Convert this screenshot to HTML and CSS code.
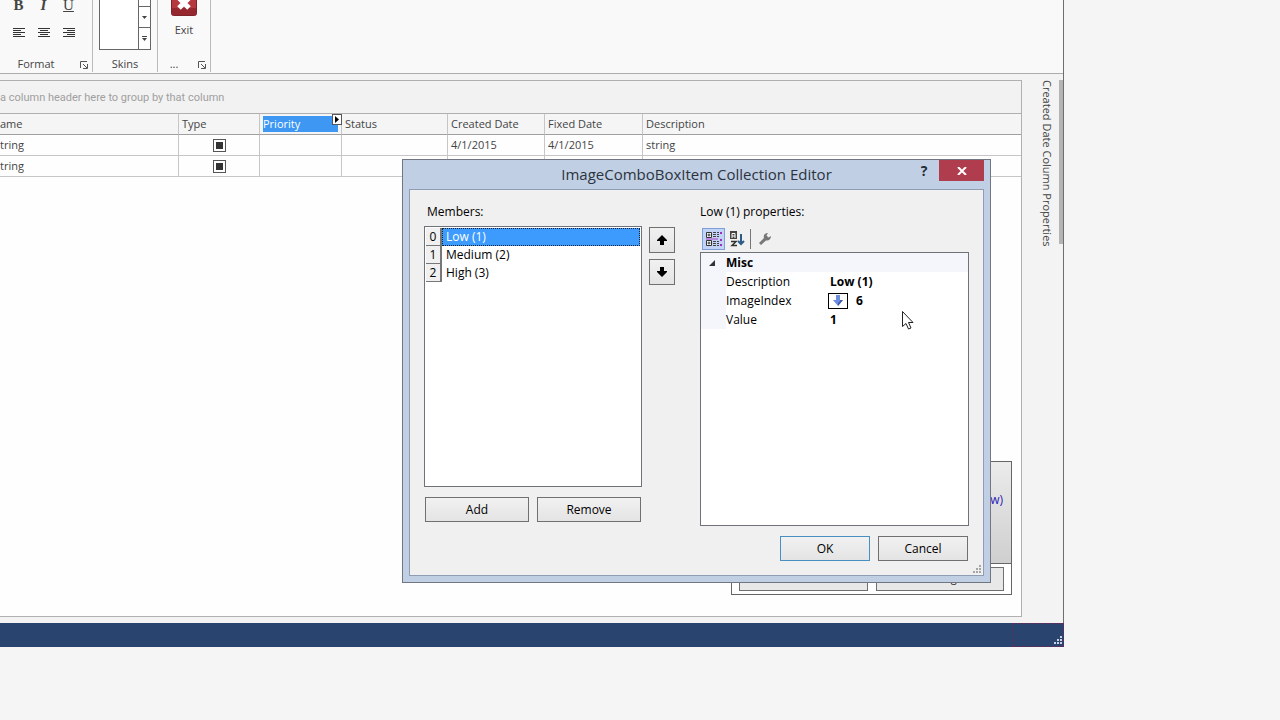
FILE: index.html
```html
<!DOCTYPE html>
<html lang="en">
<head>
    <meta charset="UTF-8">
    <meta name="viewport" content="width=device-width, initial-scale=1.0">
    <title>ImageComboBoxItem Collection Editor</title>
    <link rel="stylesheet" href="styles.css">
</head>
<body>
    <div class="designer">
        <!-- Ribbon -->
        <div class="ribbon">
            <div class="group group-format">
                <div class="group-body format-buttons">
                    <button class="tool bold">B</button>
                    <button class="tool italic">I</button>
                    <button class="tool underline">U</button>
                    <button class="tool" aria-label="Align left">
                        <svg width="12" height="10"><path d="M0 .5h12M0 2.5h8M0 4.5h12M0 6.5h8M0 8.5h12" stroke="#333"/></svg>
                    </button>
                    <button class="tool" aria-label="Center">
                        <svg width="12" height="10"><path d="M0 .5h12M2 2.5h8M0 4.5h12M2 6.5h8M0 8.5h12" stroke="#333"/></svg>
                    </button>
                    <button class="tool" aria-label="Align right">
                        <svg width="12" height="10"><path d="M0 .5h12M4 2.5h8M0 4.5h12M4 6.5h8M0 8.5h12" stroke="#333"/></svg>
                    </button>
                </div>
                <div class="group-caption">
                    <span>Format</span>
                    <svg class="launcher" width="8" height="8"><path d="M.5 7V.5H7M3 3l4 4M7.5 3v4.5H3" fill="none" stroke="#555"/></svg>
                </div>
            </div>
            <div class="group group-skins">
                <div class="group-body">
                    <div class="gallery">
                        <div class="gallery-view"></div>
                        <div class="gallery-scroll">
                            <button aria-label="Up"></button>
                            <button aria-label="Down"><svg width="5" height="3"><path d="M0 0h5L2.5 3z" fill="#444"/></svg></button>
                            <button aria-label="More"><svg width="5" height="5"><path d="M0 .5h5" stroke="#444"/><path d="M0 2h5L2.5 5z" fill="#444"/></svg></button>
                        </div>
                    </div>
                </div>
                <div class="group-caption"><span>Skins</span></div>
            </div>
            <div class="group group-exit">
                <div class="group-body">
                    <button class="exit">
                        <svg width="26" height="26" viewBox="0 0 26 26">
                            <rect x=".5" y=".5" width="25" height="25" rx="2" fill="#b5383f" stroke="#7d2329"/>
                            <rect x="1" y="18" width="24" height="7" fill="#96272e"/>
                            <path d="M8 8l10 10M18 8L8 18" stroke="#fff" stroke-width="5"/>
                        </svg>
                        <span>Exit</span>
                    </button>
                </div>
                <div class="group-caption">
                    <span>...</span>
                    <svg class="launcher" width="8" height="8"><path d="M.5 7V.5H7M3 3l4 4M7.5 3v4.5H3" fill="none" stroke="#555"/></svg>
                </div>
            </div>
        </div>

        <div class="workspace">
            <!-- Grid control -->
            <div class="grid-control">
                <div class="group-panel">a column header here to group by that column</div>
                <table class="grid">
                    <colgroup>
                        <col class="col-name"><col class="col-type"><col class="col-priority"><col class="col-status">
                        <col class="col-created"><col class="col-fixed"><col>
                    </colgroup>
                    <thead>
                        <tr>
                            <th class="cut">ame</th>
                            <th>Type</th>
                            <th class="selected"><div>Priority</div>
                                <button class="smart-tag" aria-label="Tasks"><svg width="4" height="7"><path d="M0 0v7l4-3.5z"/></svg></button>
                            </th>
                            <th>Status</th>
                            <th>Created Date</th>
                            <th>Fixed Date</th>
                            <th>Description</th>
                        </tr>
                    </thead>
                    <tbody>
                        <tr>
                            <td class="cut">tring</td>
                            <td class="check"><input type="checkbox" aria-label="Type"></td>
                            <td></td>
                            <td></td>
                            <td>4/1/2015</td>
                            <td>4/1/2015</td>
                            <td>string</td>
                        </tr>
                        <tr>
                            <td class="cut">tring</td>
                            <td class="check"><input type="checkbox" aria-label="Type"></td>
                            <td></td>
                            <td></td>
                            <td></td>
                            <td></td>
                            <td></td>
                        </tr>
                    </tbody>
                </table>
                <div class="view-popup">
                    <div class="view-level"><a href="#">w)</a></div>
                    <div class="view-buttons">
                        <button></button>
                        <button>Run Designer</button>
                    </div>
                </div>
            </div>
            <div class="side-panel">
                <span class="side-title">Created Date Column Properties</span>
                <div class="side-bar"></div>
            </div>
        </div>

        <div class="status-bar">
            <div class="status-slot">
                <svg width="8" height="8" fill="#c9d2e2"><path d="M6 0h2v2H6zM3 3h2v2H3zM6 3h2v2H6zM0 6h2v2H0zM3 6h2v2H3zM6 6h2v2H6z"/></svg>
            </div>
        </div>
    </div>

    <!-- Collection editor -->
    <div class="dialog" role="dialog" aria-labelledby="dialog-title">
        <div class="title-bar">
            <h1 id="dialog-title">ImageComboBoxItem Collection Editor</h1>
            <div class="title-buttons">
                <button class="help">?</button>
                <button class="close" aria-label="Close">
                    <svg width="10" height="8"><path d="M1 0l8 8M9 0L1 8" stroke="#fff" stroke-width="2"/></svg>
                </button>
            </div>
        </div>
        <div class="client">
            <div class="columns">
                <div class="members">
                    <div class="label" id="members-label">Members:</div>
                    <ul class="member-list" role="listbox" aria-labelledby="members-label">
                        <li class="active" role="option" aria-selected="true"><span class="index">0</span><span class="name">Low (1)</span></li>
                        <li role="option"><span class="index">1</span><span class="name">Medium (2)</span></li>
                        <li role="option"><span class="index">2</span><span class="name">High (3)</span></li>
                    </ul>
                    <div class="member-buttons">
                        <button class="btn">Add</button>
                        <button class="btn">Remove</button>
                    </div>
                </div>
                <div class="movers">
                    <button class="btn" aria-label="Move up">
                        <svg width="10" height="10"><path d="M5 0l5 5v1H7v4H3V6H0V5z"/></svg>
                    </button>
                    <button class="btn" aria-label="Move down">
                        <svg width="10" height="10"><path d="M5 10l5-5V4H7V0H3v4H0v1z"/></svg>
                    </button>
                </div>
                <div class="properties">
                    <div class="label">Low (1) properties:</div>
                    <div class="prop-toolbar">
                        <button class="prop-tool pressed" aria-label="Categorized">
                            <svg width="16" height="16" fill="none">
                                <path d="M.5 1.5h5v5h-5zM.5 9.5h5v5h-5z" fill="#fff" stroke="#333"/>
                                <path d="M1.5 4h3M3 2.5v3M1.5 12h3M3 10.5v3" stroke="#333"/>
                                <path d="M7 1.5h6M7 3.5h6M7 5.5h6M7 10.5h6M7 12.5h6M7 14.5h6" stroke="#444" stroke-dasharray="3 1"/>
                                <path d="M0 8h12" stroke="#b03cc4"/>
                                <path d="M14 1h2v2h-2zM14 8h2v2h-2zM14 13h2v2h-2z" fill="#a22cc0"/>
                            </svg>
                        </button>
                        <button class="prop-tool" aria-label="Alphabetical">
                            <svg width="16" height="16" fill="none">
                                <rect x="1" y="0" width="7" height="8" fill="#444"/>
                                <path d="M3 7V2.5h3V7M3 5h3" stroke="#fff"/>
                                <path d="M2 10.5h5L3 14.5h5" stroke="#333" stroke-width="1.5"/>
                                <path d="M12 3v10M9 10l3 3 3-3" stroke="#2b5c88" stroke-width="2"/>
                            </svg>
                        </button>
                        <span class="divider"></span>
                        <button class="prop-tool" aria-label="Property pages">
                            <svg width="12" height="12"><path d="M0 10l5-5C4 2 6 0 9 0L7.5 2.5l2 2L12 3c0 3-2 5-5 4.5L2 12z" fill="#777"/></svg>
                        </button>
                    </div>
                    <div class="prop-grid">
                        <table>
                            <colgroup><col class="col-gutter"><col class="col-prop"><col></colgroup>
                            <tbody>
                                <tr class="category">
                                    <td class="gutter"><svg width="6" height="6"><path d="M6 0v6H0z" fill="#333"/></svg></td>
                                    <th colspan="2">Misc</th>
                                </tr>
                                <tr>
                                    <td class="gutter"></td>
                                    <td>Description</td>
                                    <td class="prop-value">Low (1)</td>
                                </tr>
                                <tr>
                                    <td class="gutter"></td>
                                    <td>ImageIndex</td>
                                    <td class="prop-value">
                                        <div class="image-value">
                                            <span class="thumb"><svg width="10" height="11"><path d="M3 0h4v5h3L5 11 0 5h3z" fill="#6d8de0"/><path d="M7 0v5h3L5 11V8l2-2z" fill="#3f5bb0"/></svg></span>6
                                        </div>
                                    </td>
                                </tr>
                                <tr>
                                    <td class="gutter"></td>
                                    <td>Value</td>
                                    <td class="prop-value">1</td>
                                </tr>
                            </tbody>
                        </table>
                    </div>
                </div>
            </div>
            <div class="dialog-buttons">
                <button class="btn default">OK</button>
                <button class="btn">Cancel</button>
            </div>
            <svg class="grip" width="8" height="8" fill="#a5a5a5"><path d="M6 0h2v2H6zM3 3h2v2H3zM6 3h2v2H6zM0 6h2v2H0zM3 6h2v2H3zM6 6h2v2H6z"/></svg>
        </div>
    </div>

    <svg class="cursor" width="12" height="19"><path d="M.5.5v15l3.5-3 2.5 5.5 2.5-1-2.5-5.5h4.5z" fill="#fff" stroke="#222"/></svg>
</body>
</html>
```

FILE: styles.css
```css
* {
    box-sizing: border-box;
}

body {
    margin: 0;
    min-height: 100vh;
    padding: 0 216px 73px 0;
    display: flex;
    background: #f5f5f5;
    font-family: "Open Sans", "Noto Sans", sans-serif;
    font-size: 11px;
    color: #444;
    overflow: hidden;
}

button {
    font: inherit;
    color: inherit;
    background: none;
    border: none;
    padding: 0;
}

svg {
    display: block;
    flex-shrink: 0;
}

.designer {
    flex: 1;
    min-width: 0;
    display: flex;
    flex-direction: column;
    background: #f3f3f3;
    border-right: 1px solid #6e6e6e;
}

/* Ribbon */
.ribbon {
    display: flex;
    height: 74px;
    padding-bottom: 1px;
    background: #f9f9f9;
    border-bottom: 1px solid #ababab;
}

.group {
    display: flex;
    flex-direction: column;
    border-right: 1px solid #bbb;
}

.group-format { width: 93px; }
.group-skins { width: 65px; }
.group-exit { width: 53px; }

.group-body {
    flex: 1;
    min-height: 0;
}

.group-caption {
    position: relative;
    height: 16px;
    line-height: 16px;
    text-align: center;
}

.group-format .group-caption,
.group-exit .group-caption {
    padding-right: 20px;
}

.launcher {
    position: absolute;
    right: 4px;
    bottom: 3px;
}

.format-buttons {
    display: grid;
    grid-template-columns: repeat(3, 25px);
    grid-template-rows: 14px 42px;
    padding-left: 6px;
}

.tool {
    display: flex;
    align-items: center;
    justify-content: center;
    font-family: "Liberation Serif", serif;
    font-size: 15px;
    line-height: 8px;
    padding-bottom: 4px;
}

.bold { font-weight: bold; }
.italic { font-weight: bold; font-style: italic; }
.underline { text-decoration: underline; }

.gallery {
    display: flex;
    width: 52px;
    height: 50px;
    margin-left: 6px;
    background: #fff;
    border: 1px solid #666;
    border-top: none;
}

.gallery-view {
    flex: 1;
}

.gallery-scroll {
    width: 12px;
    display: grid;
    grid-template-rows: 6px 21px 22px;
    border-left: 1px solid #666;
}

.gallery-scroll button {
    display: flex;
    align-items: center;
    justify-content: center;
}

.gallery-scroll button + button {
    border-top: 1px solid #666;
}

.exit {
    width: 100%;
    height: 46px;
    display: flex;
    flex-direction: column;
    align-items: center;
    justify-content: flex-end;
    line-height: 16px;
    gap: 6px;
    padding-bottom: 8px;
}

/* Grid */
.workspace {
    flex: 1;
    display: flex;
    padding: 6px 0;
}

.grid-control {
    position: relative;
    flex: 1;
    min-width: 0;
    background: #fefefe;
    border: 1px solid #b0b0b0;
    border-left: none;
}

.group-panel {
    height: 33px;
    line-height: 34px;
    background: #f2f2f2;
    border-bottom: 1px solid #b0b0b0;
    font-family: Roboto, sans-serif;
    color: #a0a0a0;
}

.grid {
    width: 100%;
    table-layout: fixed;
    border-collapse: separate;
    border-spacing: 0;
}

.col-name { width: 179px; }
.col-type { width: 81px; }
.col-priority { width: 82px; }
.col-status { width: 106px; }
.col-created { width: 97px; }
.col-fixed { width: 98px; }

.grid th,
.grid td {
    position: relative;
    height: 21px;
    padding: 0 3px;
    line-height: 20px;
    font-weight: normal;
    text-align: left;
    border-right: 1px solid #c6c6c6;
    border-bottom: 1px solid #c6c6c6;
}

.grid th {
    background: #f5f5f5;
    border-bottom-color: #a0a0a0;
}

.grid th:last-child,
.grid td:last-child {
    border-right: none;
}

.grid .cut {
    padding-left: 0;
}

.grid .selected div {
    height: 16px;
    line-height: 16px;
    background: #3d97f3;
    color: #fff;
}

.smart-tag {
    position: absolute;
    top: 0;
    right: -1px;
    width: 10px;
    height: 11px;
    display: flex;
    align-items: center;
    justify-content: center;
    background: #fff;
    border: 1px solid #555;
}

.grid .check {
    text-align: center;
}

.check input {
    appearance: none;
    display: block;
    width: 13px;
    height: 13px;
    margin: 0 auto;
    background: #333;
    border: 1px solid #555;
    box-shadow: inset 0 0 0 2px #fff;
}

.view-popup {
    position: absolute;
    right: 9px;
    bottom: 21px;
    width: 281px;
    height: 134px;
    background: #fff;
    border: 1px solid #666;
}

.view-level {
    height: 102px;
    padding: 29px 8px;
    line-height: 18px;
    text-align: right;
    background: linear-gradient(#ebebeb, #cfcfcf);
    border-bottom: 1px solid #666;
}

.view-level a {
    color: #2b1bb8;
    font-size: 12px;
    text-decoration: none;
}

.view-buttons {
    display: grid;
    grid-template-columns: 1fr 1fr;
    gap: 8px;
    padding: 3px 7px;
}

.view-buttons button {
    height: 24px;
    padding-bottom: 4px;
    background: #e8e8e8;
    border: 1px solid #707070;
    color: #222;
}

.side-panel {
    width: 41px;
    display: flex;
    justify-content: flex-end;
    gap: 3px;
}

.side-title {
    writing-mode: vertical-rl;
    line-height: 18px;
}

.side-bar {
    width: 4px;
    height: 164px;
    background: #b4b4b4;
}

.status-bar {
    height: 24px;
    display: flex;
    justify-content: flex-end;
    background: #29446f;
    margin-right: -1px;
}

.status-slot {
    width: 52px;
    display: flex;
    align-items: flex-end;
    justify-content: flex-end;
    padding: 2px 1px;
    border: 1px dashed #6a2a57;
}

/* Dialog */
.dialog {
    position: absolute;
    left: 402px;
    top: 159px;
    width: 589px;
    padding: 0 6px 6px;
    background: #c0cfe3;
    border: 1px solid #707783;
    font-size: 12px;
    color: #000;
}

.title-bar {
    position: relative;
    height: 29px;
}

.title-bar h1 {
    margin: 0;
    font-size: 15px;
    font-weight: normal;
    line-height: 28px;
    text-align: center;
    color: #2c3340;
}

.title-buttons {
    position: absolute;
    top: 0;
    right: 0;
    display: flex;
}

.help {
    width: 30px;
    height: 21px;
    font-size: 14px;
    font-weight: bold;
    color: #222b38;
}

.close {
    width: 45px;
    height: 21px;
    display: flex;
    align-items: center;
    justify-content: center;
    background: #b03d4e;
}

.client {
    position: relative;
    padding: 12px 14px 14px;
    background: #f0f0f0;
    border: 1px solid #8f9db3;
}

.columns {
    display: flex;
}

.label {
    height: 24px;
    line-height: 20px;
}

.members {
    width: 218px;
}

.members .label {
    padding-left: 3px;
}

.member-list {
    height: 261px;
    margin: 0;
    padding: 1px;
    list-style: none;
    background: #fff;
    border: 1px solid #6f7278;
}

.member-list li {
    display: flex;
    height: 18px;
    line-height: 18px;
}

.index {
    width: 16px;
    text-align: center;
    background: #f0f0f0;
    border-right: 2px solid #777;
    border-bottom: 1px solid #777;
    line-height: 17px;
}

.name {
    flex: 1;
    padding-left: 4px;
}

.active .name {
    color: #fff;
    background: #3d9bfd;
    outline: 1px dotted #123;
    outline-offset: -1px;
}

.btn {
    height: 25px;
    background: linear-gradient(#f1f1f1, #e4e4e4);
    border: 1px solid #707070;
}

.btn.default {
    border-color: #4a8fc4;
}

.member-buttons {
    display: grid;
    grid-template-columns: 1fr 1fr;
    gap: 8px;
    padding: 10px 1px 0;
}

.movers {
    width: 26px;
    margin: 25px 25px 0 7px;
    display: flex;
    flex-direction: column;
    gap: 6px;
}

.movers .btn {
    height: 26px;
    display: flex;
    align-items: center;
    justify-content: center;
}

.properties {
    flex: 1;
}

.prop-toolbar {
    height: 26px;
    display: flex;
    align-items: center;
    padding-left: 2px;
}

.prop-tool {
    width: 23px;
    height: 22px;
    display: flex;
    align-items: center;
    justify-content: center;
}

.prop-tool.pressed {
    background: #c3d3f5;
    border: 1px solid #7f9fd8;
}

.divider {
    width: 1px;
    height: 20px;
    margin: 0 2px;
    background: #777;
}

.prop-grid {
    height: 274px;
    background: #fff;
    border: 1px solid #6f7278;
}

.prop-grid table {
    width: 100%;
    table-layout: fixed;
    border-collapse: collapse;
}

.col-gutter { width: 25px; }
.col-prop { width: 102px; }

.prop-grid td,
.prop-grid th {
    height: 19px;
    padding: 0;
    line-height: 19px;
    text-align: left;
}

.prop-grid .category {
    background: #f5f5fc;
}

.prop-grid .gutter {
    padding-left: 8px;
    background: #f5f5fc;
}

.prop-grid .prop-value {
    padding-left: 2px;
    font-weight: bold;
}

.prop-value .image-value {
    display: flex;
    align-items: center;
    gap: 8px;
    margin-left: -2px;
}

.thumb {
    width: 20px;
    height: 16px;
    display: flex;
    align-items: center;
    justify-content: center;
    border: 1px solid #000;
}

.dialog-buttons {
    display: flex;
    justify-content: flex-end;
    gap: 8px;
    padding: 10px 1px 0;
}

.dialog-buttons .btn {
    width: 90px;
}

.grip {
    position: absolute;
    right: 2px;
    bottom: 2px;
}

.cursor {
    position: absolute;
    left: 902px;
    top: 311px;
}
```
